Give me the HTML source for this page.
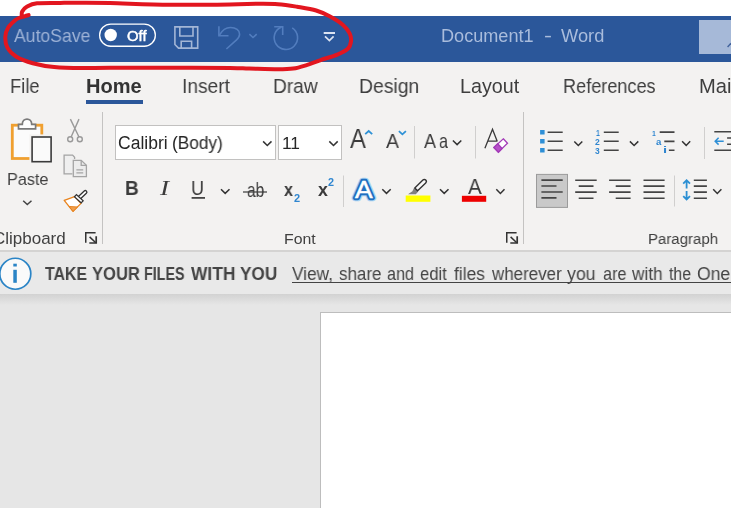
<!DOCTYPE html>
<html><head><meta charset="utf-8">
<style>
html,body{margin:0;padding:0;}
body{width:731px;height:508px;overflow:hidden;background:#fff;position:relative;font-family:"Liberation Sans",sans-serif;color:#444;}
.abs{position:absolute;}
.t{position:absolute;white-space:nowrap;line-height:1;transform-origin:0 0;will-change:transform;}
svg{position:absolute;left:0;top:0;overflow:visible;}
</style></head><body>
<div class="abs" style="left:0;top:16px;width:731px;height:46px;background:#2b579a"></div>
<div class="abs" style="left:0;top:62px;width:731px;height:188px;background:#f3f2f1"></div>
<div class="abs" style="left:0;top:250px;width:731px;height:2px;background:#d4d3d2"></div>
<div class="abs" style="left:0;top:252px;width:731px;height:42px;background:#e9e9e9"></div>
<div class="abs" style="left:0;top:294px;width:731px;height:214px;background:#e6e6e6"></div>
<div class="abs" style="left:0;top:293.5px;width:731px;height:11px;background:linear-gradient(#d2d2d2,#e6e6e6)"></div>
<div class="abs" style="left:320px;top:312px;width:420px;height:200px;background:#fff;border:1px solid #bdbdbd;box-sizing:border-box"></div>
<div class="abs" style="left:699px;top:19.5px;width:40px;height:34px;background:#a6b9d8"></div>
<!-- group separators -->
<div class="abs" style="left:102px;top:112px;width:1px;height:132px;background:#c4c3c2"></div>
<div class="abs" style="left:523px;top:112px;width:1px;height:132px;background:#c4c3c2"></div>
<!-- font boxes -->
<div class="abs" style="left:115px;top:125px;width:161px;height:35px;background:#fff;border:1px solid #c2c1c0;box-sizing:border-box"></div>
<div class="abs" style="left:278px;top:125px;width:64px;height:35px;background:#fff;border:1px solid #c2c1c0;box-sizing:border-box"></div>
<div class="abs" style="left:292px;top:282px;width:439px;height:1.2px;background:#444"></div>
<!-- home underline -->
<div class="abs" style="left:86px;top:99.5px;width:57px;height:4.2px;background:#2b579a"></div>

<svg width="731" height="508" viewBox="0 0 731 508" fill="none" stroke-linecap="butt" stroke-linejoin="miter">
<!-- toggle -->
<rect x="99.65" y="24.05" width="55.7" height="22.2" rx="11.1" stroke="#fff" stroke-width="1.3"/>
<circle cx="110.7" cy="35" r="6.2" fill="#fff"/>
<!-- save -->
<g stroke="#a3b6d6" stroke-width="1.6">
<path d="M174.9 26.9H197.7V48.1H178.5L174.9 44.5Z"/>
<path d="M179.8 26.9V36H193V26.9"/>
<path d="M181.2 48.1V41.2H191.6V48.1"/>
</g>
<!-- undo / redo -->
<g stroke="#527dbe" stroke-width="1.6">
<path d="M218.9 26.2V35.7H228.5"/>
<path d="M219.4 35.2C222 30.5 226 27.5 230.5 27.5C236 27.5 239.6 30.5 239.6 34.2C239.6 37.2 238 38.6 236 40.4L226.4 49"/>
<path d="M249.4 34.2L253 37.5L256.7 34.2"/>
<path d="M292.2 27.9A11.7 11.7 0 1 1 281.5 26.9"/>
<path d="M274.2 26.7H282.7V34.9"/>
</g>
<!-- qat customize -->
<g stroke="#dbe3f2" stroke-width="1.7">
<path d="M323.7 33H335" stroke-width="2"/>
<path d="M325 36.4L329.4 40.6L333.6 36.4"/>
</g>
<!-- search icon fragment -->
<path d="M727.6 47L731 43.2" stroke="#41629c" stroke-width="1.4"/>

<!-- PASTE -->
<rect x="12.3" y="125.2" width="29.5" height="33.3" stroke="#f0a030" stroke-width="2.8" fill="#fbfbfb"/>
<rect x="29.4" y="134.4" width="24" height="27" fill="#f3f2f1"/>
<path d="M18.5 128.8V124.3H22.3C22.3 121 24.5 119.1 27 119.1C29.5 119.1 31.7 121 31.7 124.3H35.6V128.8Z" stroke="#7a7a7a" stroke-width="1.7" fill="#fdfdfd"/>
<rect x="32.1" y="137" width="19" height="24.7" stroke="#3a3a3a" stroke-width="1.6" fill="#fafafa"/>
<path d="M23.2 200.8L27.3 204.6L31.5 200.8" stroke="#444" stroke-width="1.5"/>
<!-- scissors -->
<g stroke="#9a9a9a" stroke-width="1.4">
<path d="M70.4 119.1L79 137M79 119.1L71.1 137"/>
<circle cx="70.2" cy="139.3" r="2.5"/><circle cx="79.8" cy="139.3" r="2.5"/>
</g>
<!-- copy -->
<g stroke="#a4a4a4" stroke-width="1.3">
<path d="M72.4 173.9H64.1V155.1H72.6L74.6 157.2V159" fill="#efefef"/>
<path d="M73.3 160.4H81.2L86.4 165.4V176.6H73.3Z" fill="#ececec"/>
<path d="M81.2 160.4V165.4H86.4"/>
<path d="M76.4 169.8H83.2M76.4 172.8H83.2"/>
</g>
<!-- format painter -->
<path d="M74.6 196.6L64.2 200.4L73 211.4L81 203.4Z" stroke="#e8831d" stroke-width="1.3" fill="#fff" stroke-linejoin="round"/>
<path d="M69.2 206.5L77.6 207L73 211.4Z" fill="#f0a050" stroke="#e8831d" stroke-width="1"/>
<path d="M79.5 197.6L85.3 192.2" stroke="#333" stroke-width="4.4" stroke-linecap="round"/>
<path d="M79.5 197.6L85.3 192.2" stroke="#fff" stroke-width="1.8" stroke-linecap="round"/>
<path d="M75 195.2L82.6 202.2" stroke="#333" stroke-width="4.2"/>
<path d="M75.9 196.05L81.7 201.35" stroke="#fff" stroke-width="1.6"/>
<!-- dialog launchers -->
<g stroke="#333" stroke-width="1.5">
<path d="M95.6 232.85H85.75V242.8"/>
<path d="M89.6 236.9L95.8 242.8"/>
<path d="M89.3 243H96.2V236.2" stroke-width="1.7"/>
</g>
<g transform="translate(421 0)" stroke="#333" stroke-width="1.5">
<path d="M95.6 232.85H85.75V242.8"/>
<path d="M89.6 236.9L95.8 242.8"/>
<path d="M89.3 243H96.2V236.2" stroke-width="1.7"/>
</g>


<!-- combobox chevrons -->
<g stroke="#333" stroke-width="1.5">
<path d="M263.1 141.4L267.3 145.5L271.5 141.4"/>
<path d="M329.3 141.4L333.5 145.5L337.7 141.4"/>
<path d="M452.9 140.5L457.1 144.6L461.3 140.5"/>
<path d="M221 189.2L225.2 193.4L229.5 189.2"/>
<path d="M382.3 189.2L386.5 193.4L390.7 189.2"/>
<path d="M440 189.2L444.2 193.4L448.5 189.2"/>
<path d="M496.3 189.2L500.4 193.4L504.5 189.2"/>
<path d="M574.3 141.4L578.3 145.5L582.3 141.4"/>
<path d="M629.9 141.4L634.1 145.5L638.3 141.4"/>
<path d="M682.1 141.3L686.2 145.4L690.2 141.3"/>
<path d="M713.2 189.2L717.3 193.4L721.4 189.2"/>
</g>
<!-- grow/shrink carets -->
<g stroke="#2f92d6" stroke-width="1.8">
<path d="M365.2 134.2L368.7 131L372.2 134.2"/>
<path d="M398.9 131.2L402.4 134.4L405.9 131.2"/>
</g>
<!-- thin separators -->
<g stroke="#d0cfce" stroke-width="1">
<path d="M414.5 126V158.5M475.5 126V158.5M343.5 175.5V207M674.5 175.5V206.5M704.5 127V159"/>
</g>
<!-- clear formatting -->
<path d="M484.9 148.2L492.5 129.3L497.2 141.2M488.1 141.2H497.5" stroke="#3a3a3a" stroke-width="1.3"/>
<path d="M503.3 138.8L507.5 143.3L498.4 152.2L493.9 147.5Z" stroke="#a33bb8" stroke-width="1.3" fill="#fff"/>
<path d="M493.9 147.5L497.7 143.8L502.1 148.5L498.4 152.2Z" fill="#b650c8" stroke="#a33bb8" stroke-width="1.3"/>
<!-- strike through line -->
<path d="M243 192H267" stroke="#3b3b3b" stroke-width="1.2"/>
<!-- underline U bar -->
<path d="M191.6 197.9H205" stroke="#3b3b3b" stroke-width="1.7"/>
<!-- text effects A -->
<g font-family='"Liberation Sans", sans-serif' font-size="24.5" stroke-linejoin="round" transform="translate(355.1 197.6) scale(1.08 1)">
<text x="0" y="0" stroke="#a9d2f3" stroke-width="6.6" fill="none">A</text>
<text x="0" y="0" stroke="#1f6fc0" stroke-width="4.3" fill="none">A</text>
<text x="0" y="0" fill="#fff" stroke="#fff" stroke-width="0.5">A</text>
</g>
<!-- highlighter -->
<rect x="405.7" y="195.5" width="24.7" height="6.3" fill="#ffff00"/>
<path d="M414.2 187.5L418.3 191.5L415.8 194.3H408L412.4 191.2Z" fill="#808080"/>
<path d="M414.8 188L422.9 180.07A2 2 0 0 1 425.7 182.93L417.6 190.8Z" stroke="#333" stroke-width="1.4" fill="#fafafa" stroke-linejoin="round"/>
<!-- font color bar -->
<rect x="461.9" y="195.8" width="24.3" height="6" fill="#ee0000"/>

<!-- bullets -->
<g fill="#2e8fd6"><rect x="540.1" y="130" width="4.5" height="4.5"/><rect x="540.1" y="139" width="4.5" height="4.5"/><rect x="540.1" y="148" width="4.5" height="4.5"/></g>
<g stroke="#444" stroke-width="1.6">
<path d="M547.6 132.3H562.7M547.6 141.3H562.7M547.6 150.2H562.7"/>
<path d="M603.8 132.3H618.7M603.8 141.3H618.7M603.8 150.2H618.7"/>
<path d="M659.7 132.1H674.5M664.3 141.4H674.5M668.9 150.2H674.5"/>
<!-- decrease indent -->
<path d="M714.3 131.8H731M714.3 150.2H731M727.1 138H731M727.1 144.3H731"/>
<!-- align -->
<path d="M575.2 180.2H596.7M578.7 186.1H593.5M575.2 192.1H596.7M578.7 198.2H593.5"/>
<path d="M609.1 180.2H630.6M615.7 186.1H630.6M609.1 192.1H630.6M615.7 198.2H630.6"/>
<path d="M643.5 180.2H664.6M643.5 186.1H664.6M643.5 192.1H664.6M643.5 198.2H664.6"/>
<path d="M693.8 180.2H706.9M693.8 186.1H706.9M693.8 192.1H706.9M693.8 198.2H706.9"/>
</g>
<!-- align left selected -->
<rect x="536.5" y="174.4" width="31" height="33" fill="#c9c9c9" stroke="#9b9b9b" stroke-width="1"/>
<path d="M541.4 180.1H562.7M541.4 186H556.5M541.4 192H562.7M541.4 197.9H556.5" stroke="#444" stroke-width="1.6"/>
<!-- decrease indent arrow -->
<g stroke="#2e8fd6" stroke-width="1.5"><path d="M715.3 141.2H723.7M718.6 137.8L715.2 141.2L718.6 144.6"/></g>
<!-- line spacing arrow -->
<g stroke="#2b8fd3" stroke-width="1.8"><path d="M686.6 180.4V188.6M683.2 183.6L686.6 180.2L690 183.6M686.6 191.1V199.3M683.2 196.1L686.6 199.5L690 196.1"/></g>

<!-- info icon -->
<circle cx="15.3" cy="273.75" r="15.5" fill="#fafafa" stroke="#2a84c6" stroke-width="1.7"/>
<rect x="13.3" y="269.8" width="3.5" height="13" fill="#2a84c6"/><rect x="13.3" y="263.7" width="3.5" height="2.8" fill="#2a84c6"/>

<!-- red annotation -->
<path d="M28.6 15.1C27.9 15.3 26.1 15.8 24.5 16.3C22.9 16.8 20.6 17.3 19 18C17.4 18.7 16.6 18.9 14.8 20.5C13.0 22.1 9.8 24.8 8.2 27.5C6.6 30.2 5.4 33.6 5.3 37C5.2 40.4 5.6 44.3 7.4 47.6C9.2 50.9 12.2 54.1 16.4 56.7C20.6 59.3 26.5 61.5 32.8 63.2C39.1 64.9 46.0 66.2 54.2 67C62.4 67.8 72.8 68.0 82.1 68.1C91.4 68.2 95.3 67.8 110 67.7C124.7 67.6 150.0 67.7 170 67.7C190.0 67.8 216.8 67.8 230 68C243.2 68.2 241.2 68.4 249.2 68.6C257.2 68.8 270.6 69.3 277.9 69.3C285.2 69.3 288.4 69.3 293.2 68.6C298.0 67.9 302.1 66.5 306.6 65.1C311.1 63.7 314.9 62.0 320 60.3C325.1 58.5 332.7 56.5 337.3 54.6C341.9 52.7 345.5 51.0 347.8 48.8C350.1 46.6 350.7 43.8 351 41.2C351.3 38.7 351.0 36.2 349.7 33.5C348.4 30.8 346.4 27.8 343 24.9C339.6 22.0 334.1 18.7 329.6 16.3C325.1 13.9 321.6 12.1 316.2 10.5C310.8 8.9 303.4 7.8 297 6.7C290.6 5.7 284.3 4.7 277.9 4.2C271.5 3.7 266.7 3.8 258.7 3.8C250.7 3.8 244.8 4.3 230 4.5C215.2 4.7 190.0 5.0 170 4.8C150.0 4.5 125.0 3.4 110 3C95.0 2.6 88.3 2.7 80 2.7C71.7 2.7 67.2 2.8 60 2.9C52.8 3.0 42.5 2.7 37 3.3C31.5 3.9 29.6 5.2 27.1 6.6C24.6 8.0 23.1 9.9 22.2 11.5C21.3 13.1 21.9 15.2 21.8 16" stroke="#e2161f" stroke-width="4" stroke-linecap="round" stroke-linejoin="round" fill="none"/>
</svg>

<div class="t" style='left:14.10px;top:27.23px;font-size:18.55px;color:#9db2d6;transform:scaleX(0.9514);'>AutoSave</div>
<div class="t" style='left:127.41px;top:29.90px;font-size:13.77px;color:#fff;transform:scaleX(1.0802);-webkit-text-stroke:0.45px #fff;'>Off</div>
<div class="t" style='left:440.94px;top:26.60px;font-size:18.12px;color:#a9bcdc;transform:scaleX(0.9962);'>Document1</div>
<div class="t" style='left:544.04px;top:26.60px;font-size:18.12px;color:#a9bcdc;transform:scaleX(1.3248);'>-</div>
<div class="t" style='left:561.30px;top:26.60px;font-size:18.12px;color:#a9bcdc;transform:scaleX(1.0086);'>Word</div>
<div class="t" style='left:9.79px;top:76.95px;font-size:19.71px;color:#3e3e3e;transform:scaleX(0.9305);'>File</div>
<div class="t" style='left:85.60px;top:77.19px;font-size:19.43px;color:#333;font-weight:bold;transform:scaleX(1.0324);'>Home</div>
<div class="t" style='left:182.07px;top:76.95px;font-size:19.71px;color:#3e3e3e;transform:scaleX(0.9734);'>Insert</div>
<div class="t" style='left:272.67px;top:76.95px;font-size:19.71px;color:#3e3e3e;transform:scaleX(0.9715);'>Draw</div>
<div class="t" style='left:359.49px;top:76.95px;font-size:19.71px;color:#3e3e3e;transform:scaleX(0.9838);'>Design</div>
<div class="t" style='left:460.33px;top:76.95px;font-size:19.71px;color:#3e3e3e;transform:scaleX(0.9940);'>Layout</div>
<div class="t" style='left:562.75px;top:76.95px;font-size:19.71px;color:#3e3e3e;transform:scaleX(0.9196);'>References</div>
<div class="t" style='left:698.99px;top:76.95px;font-size:19.71px;color:#3e3e3e;transform:scaleX(1.0222);'>Mai</div>
<div class="t" style='left:7.01px;top:170.86px;font-size:17.10px;color:#404040;transform:scaleX(0.9462);'>Paste</div>
<div class="t" style='left:-7.39px;top:230.95px;font-size:15.94px;color:#404040;transform:scaleX(1.0661);'>Clipboard</div>
<div class="t" style='left:284.43px;top:230.52px;font-size:15.51px;color:#404040;transform:scaleX(1.0227);'>Font</div>
<div class="t" style='left:647.98px;top:230.52px;font-size:15.51px;color:#404040;transform:scaleX(0.9674);'>Paragraph</div>
<div class="t" style='left:118.03px;top:135.19px;font-size:17.54px;color:#262626;transform:scaleX(0.9952);'>Calibri</div>
<div class="t" style='left:172.46px;top:135.19px;font-size:17.54px;color:#262626;transform:scaleX(0.9845);'>(Body)</div>
<div class="t" style='left:282.19px;top:135.44px;font-size:17.25px;color:#262626;transform:scaleX(1.0063);'>11</div>
<div class="t" style='left:45.44px;top:265.38px;font-size:18.14px;color:#444;font-weight:bold;transform:scaleX(0.8752);'>TAKE</div>
<div class="t" style='left:91.73px;top:265.38px;font-size:18.14px;color:#444;font-weight:bold;transform:scaleX(0.9151);'>YOUR</div>
<div class="t" style='left:143.94px;top:265.38px;font-size:18.14px;color:#444;font-weight:bold;transform:scaleX(0.7896);'>FILES</div>
<div class="t" style='left:190.80px;top:265.38px;font-size:18.14px;color:#444;font-weight:bold;transform:scaleX(0.9600);'>WITH</div>
<div class="t" style='left:239.92px;top:265.38px;font-size:18.14px;color:#444;font-weight:bold;transform:scaleX(0.9485);'>YOU</div>
<div class="t" style='left:292.20px;top:265.18px;font-size:18.26px;color:#444;transform:scaleX(0.9446);'>View,</div>
<div class="t" style='left:338.86px;top:265.18px;font-size:18.26px;color:#444;transform:scaleX(0.9294);'>share</div>
<div class="t" style='left:386.83px;top:265.18px;font-size:18.26px;color:#444;transform:scaleX(0.8855);'>and</div>
<div class="t" style='left:419.71px;top:265.18px;font-size:18.26px;color:#444;transform:scaleX(0.9123);'>edit</div>
<div class="t" style='left:453.92px;top:265.18px;font-size:18.26px;color:#444;transform:scaleX(0.9522);'>files</div>
<div class="t" style='left:492.17px;top:265.18px;font-size:18.26px;color:#444;transform:scaleX(0.9287);'>wherever</div>
<div class="t" style='left:566.90px;top:265.18px;font-size:18.26px;color:#444;transform:scaleX(0.9705);'>you</div>
<div class="t" style='left:603.18px;top:265.18px;font-size:18.26px;color:#444;transform:scaleX(0.8893);'>are</div>
<div class="t" style='left:632.27px;top:265.18px;font-size:18.26px;color:#444;transform:scaleX(0.9453);'>with</div>
<div class="t" style='left:668.74px;top:265.18px;font-size:18.26px;color:#444;transform:scaleX(0.8679);'>the</div>
<div class="t" style='left:697.40px;top:265.18px;font-size:18.26px;color:#444;transform:scaleX(0.9630);'>One</div>
<div class="t" style='left:349.80px;top:125.40px;font-size:28.12px;color:#3b3b3b;transform:scaleX(0.8494);'>A</div>
<div class="t" style='left:385.90px;top:130.93px;font-size:20.43px;color:#3b3b3b;transform:scaleX(0.9568);'>A</div>
<div class="t" style='left:423.90px;top:130.93px;font-size:20.43px;color:#3b3b3b;transform:scaleX(0.8838);'>A</div>
<div class="t" style='left:438.55px;top:130.93px;font-size:20.43px;color:#3b3b3b;transform:scaleX(0.7905);'>a</div>
<div class="t" style='left:125.30px;top:179.44px;font-size:19.71px;color:#3b3b3b;font-weight:bold;transform:scaleX(0.9641);'>B</div>
<div class="t" style='left:160.35px;top:177.58px;font-size:21.23px;color:#3b3b3b;font-style:italic;font-family:"Liberation Serif", serif;transform:scaleX(1.2888);'>I</div>
<div class="t" style='left:191.15px;top:179.25px;font-size:19.71px;color:#3b3b3b;transform:scaleX(0.9144);'>U</div>
<div class="t" style='left:246.57px;top:181.47px;font-size:19.45px;color:#3b3b3b;transform:scaleX(0.7997);'>ab</div>
<div class="t" style='left:284.40px;top:182.49px;font-size:17.78px;color:#3b3b3b;font-weight:bold;transform:scaleX(0.9102);'>x</div>
<div class="t" style='left:294.27px;top:192.69px;font-size:10.71px;color:#2f86d0;font-weight:bold;transform:scaleX(1.0286);'>2</div>
<div class="t" style='left:318.20px;top:182.49px;font-size:17.78px;color:#3b3b3b;font-weight:bold;transform:scaleX(0.9511);'>x</div>
<div class="t" style='left:328.38px;top:178.34px;font-size:10.43px;color:#2f86d0;font-weight:bold;transform:scaleX(1.0372);'>2</div>
<div class="t" style='left:467.60px;top:176.33px;font-size:22.32px;color:#3b3b3b;transform:scaleX(0.9162);'>A</div>
<div class="t" style='left:595.88px;top:129.34px;font-size:8.43px;color:#2f86d0;font-weight:bold;transform:scaleX(0.8330);'>1</div>
<div class="t" style='left:594.94px;top:137.64px;font-size:8.43px;color:#2f86d0;font-weight:bold;transform:scaleX(1.0169);'>2</div>
<div class="t" style='left:595.03px;top:146.64px;font-size:8.43px;color:#2f86d0;font-weight:bold;transform:scaleX(0.9966);'>3</div>
<div class="t" style='left:651.99px;top:129.70px;font-size:8.00px;color:#2f86d0;font-weight:bold;transform:scaleX(0.8511);'>1</div>
<div class="t" style='left:655.71px;top:138.14px;font-size:8.89px;color:#2f86d0;font-weight:bold;transform:scaleX(1.0841);'>a</div>
<div class="t" style='left:663.02px;top:145.60px;font-size:9.18px;color:#2f86d0;font-weight:bold;transform:scaleX(1.5980);'>i</div>
</body></html>
